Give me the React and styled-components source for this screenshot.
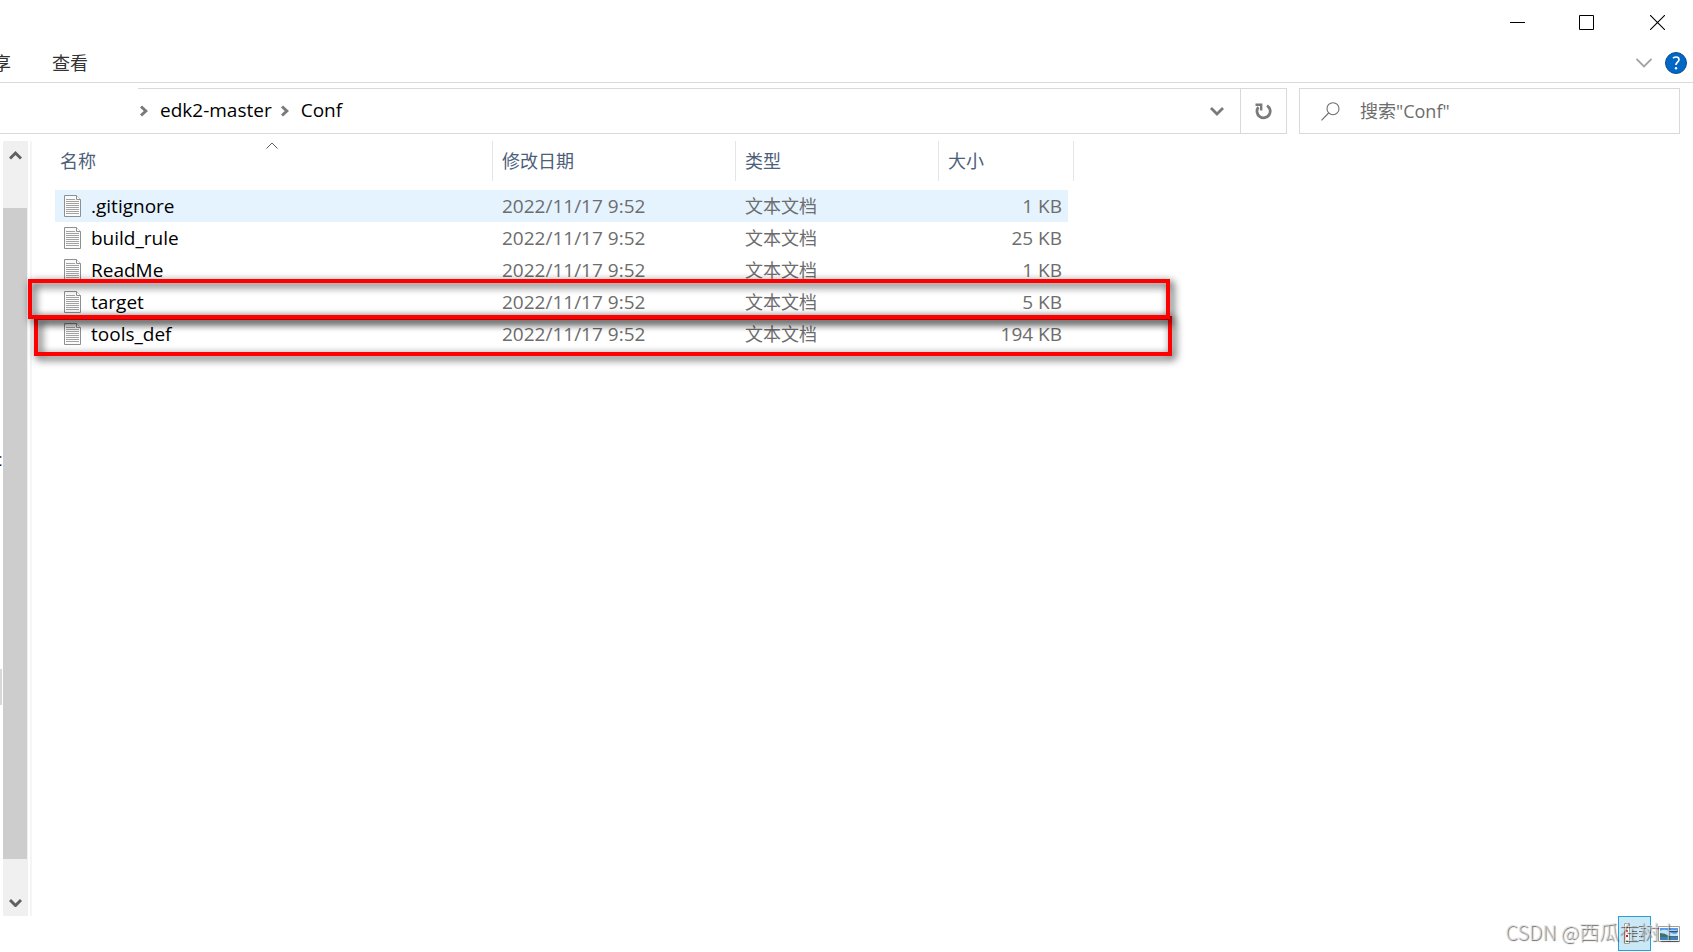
import React from "react";
import styled, { createGlobalStyle } from "styled-components";

const GlobalStyle = createGlobalStyle`
  * { box-sizing: border-box; }
  body {
    margin: 0;
    background: #fff;
    color: #000;
    font-family: "Open Sans", "Noto Sans CJK SC", sans-serif;
    font-size: 19px;
  }
  button {
    border: 0;
    padding: 0;
    background: none;
    font: inherit;
    color: inherit;
    display: flex;
    align-items: center;
    justify-content: center;
  }
`;

const Window = styled.div`
  min-height: 100vh;
  display: flex;
  flex-direction: column;
  overflow: hidden;
`;

const TitleBar = styled.header`
  height: 44px;
  display: flex;
  justify-content: flex-end;
`;

const CaptionButton = styled.button`
  width: ${(p) => p.$width || 69}px;
  height: 44px;
`;

const Ribbon = styled.nav`
  height: 39px;
  display: flex;
  align-items: center;
  border-bottom: 1px solid #d9d9d9;
  padding-right: 6px;
`;

const RibbonTab = styled.button`
  color: #333;
  font-size: 18px;
  line-height: 24px;
  margin-left: ${(p) => (p.$clipped ? -25 : 41)}px;
`;

const RibbonTools = styled.div`
  margin-left: auto;
  display: flex;
  align-items: center;
  gap: 13px;
`;

const AddressRow = styled.div`
  height: 51px;
  padding-top: 5px;
  padding-right: 13px;
  display: flex;
`;

const AddressBar = styled.div`
  flex: 1;
  display: flex;
  border-bottom: 1px solid #d9d9d9;
`;

const Crumbs = styled.div`
  flex: 1;
  margin-left: 138px;
  padding-left: 2px;
  display: flex;
  align-items: center;
  border-top: 1px solid #d9d9d9;
`;

const Crumb = styled.button`
  line-height: 24px;
  padding: 0 9px 3px 12px;
`;

const AddressButton = styled.button`
  width: 47px;
  border-top: 1px solid #d9d9d9;
  border-right: ${(p) => (p.$edge ? "1px solid #d9d9d9" : "0")};
  border-left: ${(p) => (p.$edge ? "1px solid #d9d9d9" : "0")};
`;

const SearchBox = styled.label`
  width: 381px;
  margin-left: 12px;
  padding-left: 21px;
  border: 1px solid #d9d9d9;
  display: flex;
  align-items: center;
  gap: 20px;
`;

const SearchInput = styled.input`
  flex: 1;
  min-width: 0;
  border: 0;
  outline: 0;
  padding: 0;
  background: none;
  font: inherit;
  font-size: 18px;
  line-height: 24px;
  &::placeholder { color: #6d6d6d; opacity: 1; }
`;

const Body = styled.main`
  flex: 1;
  display: flex;
  padding-top: 7px;
`;

const TreeEdge = styled.div`
  width: 3px;
  overflow: hidden;
  display: flex;
  flex-direction: column;
`;

const TreeLabel = styled.span`
  margin-top: 306px;
  margin-left: -7px;
  line-height: 24px;
`;

const TreeSelection = styled.span`
  width: 2px;
  height: 36px;
  margin-top: 198px;
  background: #d9d9d9;
`;

const ScrollBar = styled.div`
  width: 25px;
  display: flex;
  flex-direction: column;
  background: #f0f0f0;
`;

const ScrollButton = styled.button`
  height: 28px;
`;

const ScrollTrack = styled.div`
  flex: 1;
  padding: 39px 1px 29px 0;
  display: flex;
`;

const ScrollThumb = styled.div`
  flex: 1;
  background: #cdcdcd;
`;

const FilePane = styled.section`
  flex: 1;
  position: relative;
  margin-left: 2px;
  padding-left: 23px;
  border-left: 2px solid #f5f5f5;
`;

const FileTable = styled.table`
  width: 1019px;
  table-layout: fixed;
  border-collapse: separate;
  border-spacing: 0;
`;

const HeadCell = styled.th`
  width: ${(p) => p.$width}px;
  height: 40px;
  padding: 0 0 0 ${(p) => p.$pad || 9}px;
  position: relative;
  border-right: 1px solid #e5e5e5;
  color: #4c607a;
  font-size: 18px;
  font-weight: 400;
  line-height: 24px;
  text-align: left;
`;

const SortMark = styled.svg`
  position: absolute;
  top: 1px;
  left: calc(50% - 8px);
`;

const Gap = styled.tr`
  height: 9px;
`;

const Row = styled.tr`
  height: 32px;
  td { background: ${(p) => (p.$active ? "#e5f3ff" : "transparent")}; }
`;

const Cell = styled.td`
  padding: 0 0 0 9px;
  color: #6d6d6d;
  font-size: ${(p) => (p.$cjk ? 18 : 19)}px;
  line-height: 24px;
  white-space: nowrap;
`;

const SizeCell = styled(Cell)`
  padding-right: 6px;
  border-right: 6px solid transparent;
  background-clip: padding-box !important;
  text-align: right;
`;

const FileName = styled.div`
  display: flex;
  align-items: center;
  gap: 10px;
  color: #000;
`;

const Mark = styled.div`
  position: absolute;
  top: ${(p) => p.$top}px;
  left: ${(p) => p.$left}px;
  width: ${(p) => p.$width}px;
  height: 40px;
  border: 4px solid #f00;
  filter: drop-shadow(3px 3px 4px rgba(0, 0, 0, 0.85));
  pointer-events: none;
`;

const StatusBar = styled.footer`
  position: relative;
  height: 36px;
  padding-right: 8px;
  display: flex;
  justify-content: flex-end;
  gap: 1px;
`;

const ViewButton = styled.button`
  width: 33px;
  height: 35px;
  border: ${(p) => (p.$on ? "1px solid #26a0da" : "0")};
  background: ${(p) => (p.$on ? "#cbe8f6" : "none")};
`;

const Watermark = styled.span`
  position: absolute;
  right: 14px;
  bottom: 6px;
  font-family: "Noto Sans CJK SC", sans-serif;
  font-weight: 300;
  font-size: 20px;
  line-height: 28px;
  color: rgba(225, 225, 225, 0.7);
  text-shadow: 1px 1px 1px rgba(0, 0, 0, 0.6);
`;

const Chevron = ({ w, h, d, color = "#606060", stroke = 3 }) => (
  <svg width={w} height={h} fill="none" stroke={color} strokeWidth={stroke} aria-hidden="true">
    <path d={d} />
  </svg>
);

const CrumbArrow = () => <Chevron w={8} h={12} d="M1 1.5L5.8 6L1 10.5" color="#7a7a7a" stroke={3} />;

const DocIcon = () => (
  <svg width="17" height="22" viewBox="0 0 17 22" aria-hidden="true">
    <path d="M.5 .5H12.5L16.5 4.5V21.5H.5Z" fill="#fafafa" stroke="#8c9092" />
    <path d="M12.5 .5V4.5H16.5" fill="#fff" stroke="#8c9092" />
    <path
      d="M2 4.5H11M2 6.5H15M2 8.5H15M2 10.5H15M2 12.5H15M2 14.5H15M2 16.5H15M2 18.5H15"
      stroke="#a3a3a3"
    />
  </svg>
);

const DetailsIcon = () => (
  <svg width="21" height="21" viewBox="0 0 21 21" aria-hidden="true">
    <path d="M.5 .5H5.5V20.5H.5Z" fill="#fff" stroke="#a0a0a0" />
    <path d="M2 3H4V5H2Z" fill="#8a8a8a" />
    <path d="M2 7H4V9H2Z" fill="#d06a50" />
    <path d="M2 12H4V14H2Z" fill="#d02020" />
    <path d="M2 17H4V19H2Z" fill="#5aa04a" />
    <path d="M8 3.5H13M15 3.5H20M8 8.5H13M15 8.5H20M8 13.5H13M15 13.5H20M8 17.5H13M15 17.5H20" stroke="#6b7378" />
  </svg>
);

const PictureIcon = () => (
  <svg width="22" height="16" viewBox="0 0 22 16" aria-hidden="true">
    <path d="M.5 .5H21.5V15.5H.5Z" fill="#fff" stroke="#a0a0a0" />
    <path d="M2 2H20V14H2Z" fill="#5b9be6" />
    <path d="M2 5Q7 2 12 6T20 6V10H2Z" fill="#c6e4f7" />
    <path d="M2 7Q7 7 11 10H20V11H2Z" fill="#3c7560" />
    <path d="M2 11H20V14H2Z" fill="#3f7fbd" />
  </svg>
);

const files = [
  { name: ".gitignore", size: "1 KB", active: true },
  { name: "build_rule", size: "25 KB" },
  { name: "ReadMe", size: "1 KB" },
  { name: "target", size: "5 KB" },
  { name: "tools_def", size: "194 KB" },
];

export default function App() {
  return (
    <>
      <GlobalStyle />
      <Window>
        <TitleBar>
          <CaptionButton aria-label="最小化">
            <svg width="15" height="15"><path d="M0 7.5H15" stroke="#000" /></svg>
          </CaptionButton>
          <CaptionButton aria-label="最大化">
            <svg width="15" height="15"><path d="M.5 .5H14.5V14.5H.5Z" fill="none" stroke="#000" /></svg>
          </CaptionButton>
          <CaptionButton $width={72} aria-label="关闭">
            <svg width="15" height="15"><path d="M0 0L15 15M15 0L0 15" stroke="#000" strokeWidth="1.1" /></svg>
          </CaptionButton>
        </TitleBar>

        <Ribbon>
          <RibbonTab $clipped>共享</RibbonTab>
          <RibbonTab>查看</RibbonTab>
          <RibbonTools>
            <button aria-label="展开功能区">
              <Chevron w={16} h={10} d="M.5 1L8 8.5L15.5 1" color="#a3a3a3" stroke={1.8} />
            </button>
            <button aria-label="帮助">
              <svg width="22" height="22" viewBox="0 0 22 22">
                <circle cx="11" cy="11" r="10.5" fill="#0067c5" stroke="#0b4f94" />
                <path
                  d="M8 6.2Q9.4 5 11.2 5Q14 5 14 7.5Q14 9 12.4 10.2Q11 11.2 11 13"
                  fill="none"
                  stroke="#fff"
                  strokeWidth="1.7"
                />
                <circle cx="11" cy="16.2" r="1.2" fill="#fff" />
              </svg>
            </button>
          </RibbonTools>
        </Ribbon>

        <AddressRow>
          <AddressBar>
            <Crumbs>
              <CrumbArrow />
              <Crumb>edk2-master</Crumb>
              <CrumbArrow />
              <Crumb>Conf</Crumb>
            </Crumbs>
            <AddressButton aria-label="历史记录">
              <Chevron w={14} h={10} d="M1 2L7 8L13 2" color="#7a7a7a" stroke={2.8} />
            </AddressButton>
            <AddressButton $edge aria-label="刷新">
              <svg width="17" height="17" viewBox="0 0 17 17" fill="none" stroke="#7a7a7a" aria-hidden="true">
                <path d="M12 2.6A6.6 6.6 0 1 1 3.4 4.2" strokeWidth="2.8" />
                <path d="M.5 1.7H6.2V7.6" strokeWidth="2.4" />
              </svg>
            </AddressButton>
          </AddressBar>
          <SearchBox>
            <svg width="19" height="19" viewBox="0 0 19 19" fill="none" stroke="#6d6d6d" strokeWidth="1.1" aria-hidden="true">
              <circle cx="12" cy="6.7" r="6" />
              <path d="M7.6 11L.5 18.3" />
            </svg>
            <SearchInput type="text" placeholder={'搜索"Conf"'} aria-label="搜索" />
          </SearchBox>
        </AddressRow>

        <Body>
          <TreeEdge aria-hidden="true">
            <TreeLabel>c</TreeLabel>
            <TreeSelection />
          </TreeEdge>
          <ScrollBar>
            <ScrollButton aria-label="向上滚动">
              <Chevron w={13} h={10} d="M1 8.5L6.5 3L12 8.5" />
            </ScrollButton>
            <ScrollTrack>
              <ScrollThumb />
            </ScrollTrack>
            <ScrollButton aria-label="向下滚动">
              <Chevron w={13} h={10} d="M1 3L6.5 8.5L12 3" />
            </ScrollButton>
          </ScrollBar>

          <FilePane>
            <FileTable>
              <thead>
                <tr>
                  <HeadCell $width={438} $pad={5}>
                    名称
                    <SortMark width="12" height="7" fill="none" stroke="#606060">
                      <path d="M.5 6.5L6 1L11.5 6.5" />
                    </SortMark>
                  </HeadCell>
                  <HeadCell $width={243}>修改日期</HeadCell>
                  <HeadCell $width={203}>类型</HeadCell>
                  <HeadCell $width={135}>大小</HeadCell>
                </tr>
                <Gap />
              </thead>
              <tbody>
                {files.map((f) => (
                  <Row key={f.name} $active={f.active}>
                    <Cell>
                      <FileName>
                        <DocIcon />
                        {f.name}
                      </FileName>
                    </Cell>
                    <Cell>2022/11/17 9:52</Cell>
                    <Cell $cjk>文本文档</Cell>
                    <SizeCell>{f.size}</SizeCell>
                  </Row>
                ))}
              </tbody>
            </FileTable>
            <Mark $top={175} $left={2} $width={1138} />
            <Mark $top={138} $left={-4} $width={1142} />
          </FilePane>
        </Body>

        <StatusBar>
          <ViewButton $on aria-label="详细信息">
            <DetailsIcon />
          </ViewButton>
          <ViewButton aria-label="大缩略图">
            <PictureIcon />
          </ViewButton>
          <Watermark>CSDN @西瓜在树上</Watermark>
        </StatusBar>
      </Window>
    </>
  );
}
